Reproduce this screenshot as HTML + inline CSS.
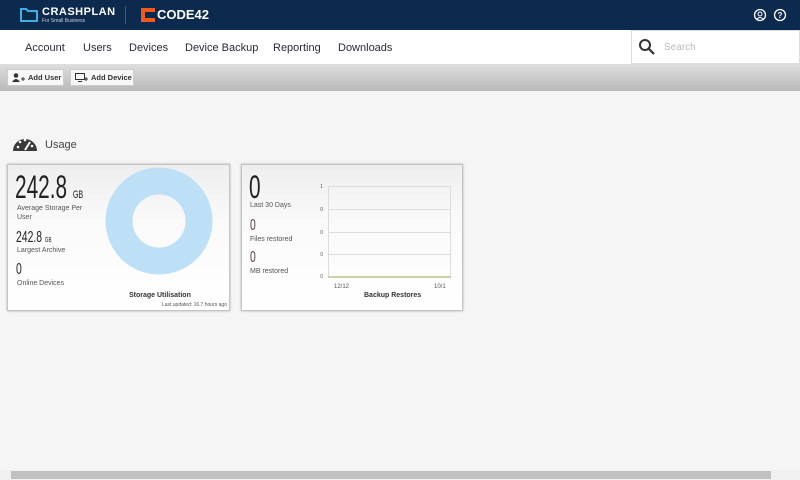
<!DOCTYPE html>
<html><head><style>
*{margin:0;padding:0;box-sizing:border-box}
body{width:800px;height:480px;overflow:hidden;background:#f5f5f5;font-family:"Liberation Sans",sans-serif;position:relative}
.hdr{position:absolute;left:0;top:0;width:800px;height:30px;background:#0c2a4e}
.nav{position:absolute;left:0;top:30px;width:800px;height:34px;background:#fff}
.nav span{position:absolute;top:11px;font-size:11px;color:#2a2a3a}
.tb{position:absolute;left:0;top:64px;width:800px;height:27px;background:linear-gradient(#dedede,#b9b9b9)}
.btn{position:absolute;top:69px;height:17px;background:#f7f7f7;border:1px solid #ccc;font-size:7.5px;color:#333;line-height:15px;padding-left:20px;font-weight:bold}
.card{position:absolute;top:164px;height:147px;border:1px solid #c4c4c4;box-shadow:0 0 2px #aaa;background:linear-gradient(#eeeeee,#fafafa 40%,#fff)}
.big{position:absolute;font-family:"Liberation Sans Narrow","Liberation Sans",sans-serif;color:#222;transform:scaleX(.65);transform-origin:left top;white-space:nowrap}
.lbl{position:absolute;font-size:7px;color:#555}
</style></head><body>
<div class="hdr">
 <svg style="position:absolute;left:20px;top:7px" width="18" height="15"><path d="M1 2h5l2 2h9v10H1z" fill="none" stroke="#3fb0e0" stroke-width="2"/></svg>
 <div style="position:absolute;left:42px;top:6px;color:#fff;font-size:11px;font-weight:bold;letter-spacing:.5px">CRASHPLAN</div>
 <div style="position:absolute;left:42px;top:18px;color:#ccd;font-size:5px">For Small Business</div>
 <div style="position:absolute;left:125px;top:6px;width:1px;height:18px;background:#556"></div>
 <div style="position:absolute;left:141px;top:8px;width:14px;height:14px;background:#f25a1c"></div>
 <div style="position:absolute;left:145px;top:12px;width:10px;height:6px;background:#0c2a4e"></div>
 <div style="position:absolute;left:157px;top:7px;color:#fff;font-size:13px;font-weight:bold">CODE42</div>
 <svg style="position:absolute;left:753px;top:8px" width="34" height="14"><circle cx="7" cy="7" r="5.5" fill="none" stroke="#fff" stroke-width="1.3"/><circle cx="7" cy="6" r="2" fill="none" stroke="#fff"/><path d="M4 11q3-3 6 0" stroke="#fff" fill="none"/><circle cx="27" cy="7" r="5.5" fill="none" stroke="#fff" stroke-width="1.3"/><text x="27" y="10" font-size="8" font-weight="bold" fill="#fff" text-anchor="middle" font-family="Liberation Sans">?</text></svg>
</div>
<div class="nav">
 <span style="left:25px;top:12px">Account</span><span style="left:83px;top:12px">Users</span><span style="left:129px;top:12px">Devices</span><span style="left:185px;top:12px">Device Backup</span><span style="left:273px;top:12px">Reporting</span><span style="left:338px;top:12px">Downloads</span>
 <div style="position:absolute;left:631px;top:0;width:169px;height:34px;border:1px solid #ddd;background:#fff"></div>
 <svg style="position:absolute;left:638px;top:8px" width="18" height="18"><circle cx="7" cy="7" r="5" fill="none" stroke="#333" stroke-width="2"/><path d="M11 11l5 5" stroke="#333" stroke-width="2.2"/></svg>
 <span style="left:664px;color:#bbb;font-size:10px;top:12px">Search</span>
</div>
<div class="tb"></div>
<div class="btn" style="left:7px;width:57px">Add User<svg style="position:absolute;left:4px;top:3px" width="13" height="9"><circle cx="4" cy="2.5" r="2.3" fill="#333"/><path d="M0 9q4-6 8 0z" fill="#333"/><path d="M9 6h4M11 4v4" stroke="#333"/></svg></div>
<div class="btn" style="left:70px;width:64px">Add Device<svg style="position:absolute;left:4px;top:3px" width="13" height="9"><rect x="0.5" y="0.5" width="9" height="6" fill="none" stroke="#333"/><path d="M3 8.5h4M9 6h4M11 4v4" stroke="#333"/></svg></div>
<svg style="position:absolute;left:12px;top:136px" width="26" height="16"><path d="M1 15A12 12 0 0 1 25 15z" fill="#3a3a3a"/><circle cx="6" cy="11" r="1.3" fill="#fff"/><circle cx="8" cy="6" r="1.3" fill="#fff"/><circle cx="13" cy="4" r="1.3" fill="#fff"/><circle cx="20" cy="10" r="1.3" fill="#fff"/><path d="M13 14l5-8" stroke="#fff" stroke-width="2"/></svg>
<div style="position:absolute;left:45px;top:139px;font-size:11px;color:#444">Usage</div>
<div class="card" style="left:7px;width:223px">
 <div class="big" style="left:7px;top:4px;font-size:32px">242.8 <span style="font-size:11px">GB</span></div>
 <div class="lbl" style="left:9px;top:39px;line-height:9px">Average Storage Per<br>User</div>
 <div class="big" style="left:8px;top:64px;font-size:16px">242.8 <span style="font-size:7px">GB</span></div>
 <div class="lbl" style="left:9px;top:82px">Largest Archive</div>
 <div class="big" style="left:8px;top:96px;font-size:16px">0</div>
 <div class="lbl" style="left:9px;top:115px">Online Devices</div>
 <svg style="position:absolute;left:96px;top:0" width="120" height="120"><circle cx="55" cy="56" r="40" fill="none" stroke="#bde0f6" stroke-width="27"/></svg>
 <div style="position:absolute;left:121px;top:127px;font-size:7px;font-weight:bold;color:#333">Storage Utilisation</div>
 <div style="position:absolute;right:2px;top:137px;font-size:5px;color:#555">Last updated: 16.7 hours ago</div>
</div>
<div class="card" style="left:241px;width:222px">
 <div class="big" style="left:7px;top:4px;font-size:32px">0</div>
 <div class="lbl" style="left:8px;top:37px">Last 30 Days</div>
 <div class="big" style="left:8px;top:52px;font-size:16px;color:#544">0</div>
 <div class="lbl" style="left:8px;top:71px">Files restored</div>
 <div class="big" style="left:8px;top:84px;font-size:16px;color:#544">0</div>
 <div class="lbl" style="left:8px;top:103px">MB restored</div>
 <svg style="position:absolute;left:0;top:0" width="222" height="147" font-family="Liberation Sans" font-size="5" fill="#555">
  <g stroke="#ddd"><path d="M86 21.5h123M86 44.5h123M86 67.5h123M86 89.5h123M208.5 21v91M86.5 21v91"/></g>
  <path d="M86 112h123" stroke="#b8c48c" stroke-width="1.5"/>
  <text x="81" y="23" text-anchor="end">1</text><text x="81" y="46" text-anchor="end">0</text><text x="81" y="69" text-anchor="end">0</text><text x="81" y="91" text-anchor="end">0</text><text x="81" y="113" text-anchor="end">0</text>
  <text x="92" y="123" font-size="6">12/12</text><text x="192" y="123" font-size="6">10/1</text>
 </svg>
 <div style="position:absolute;left:122px;top:127px;font-size:7px;font-weight:bold;color:#333">Backup Restores</div>
</div>
<div style="position:absolute;left:0;top:470px;width:800px;height:10px;background:#f0f0f0"></div>
<div style="position:absolute;left:11px;top:471px;width:760px;height:8px;background:#c1c1c1"></div>
</body></html>
